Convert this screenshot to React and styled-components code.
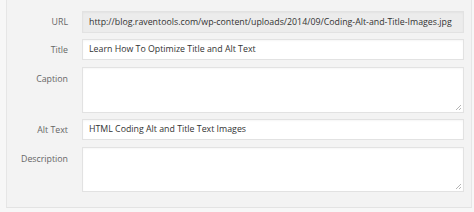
import React from "react";
import styled, { createGlobalStyle } from "styled-components";

const Global = createGlobalStyle`
  html, body { margin: 0; padding: 0; background: #f7f7f7; }
  body { font-family: "Open Sans", "Noto Sans", sans-serif; }
`;

const Frame = styled.div`
  width: 474px;
  height: 212px;
  box-sizing: border-box;
  padding: 0 2px 4px 6px;
  background: #f7f7f7;
`;

const Panel = styled.div`
  box-sizing: border-box;
  height: 100%;
  background: #f3f3f3;
  border-left: 1px solid #e6e6e6;
  border-right: 1px solid #e6e6e6;
  border-bottom: 1px solid #e3e3e3;
  padding: 11px 7px 0 0;
  display: grid;
  grid-template-columns: 75px 1fr;
  row-gap: 6px;
  align-content: start;
`;

const Label = styled.label`
  font-size: 8.8px;
  color: #666;
  text-align: right;
  padding-right: 14px;
  line-height: ${(p) => (p.$multi ? "normal" : "22px")};
  padding-top: ${(p) => (p.$multi ? "6px" : "0")};
`;

const Field = styled.div`
  box-sizing: border-box;
  height: ${(p) => p.$h}px;
  background: ${(p) => (p.$readonly ? "#ececec" : "#fff")};
  border: 1px solid #e2e2e2;
  box-shadow: inset 0 1px 2px rgba(0, 0, 0, 0.04);
  font-size: 8.8px;
  color: #333;
  padding: 0 6px;
  line-height: ${(p) => p.$h - 2}px;
  white-space: nowrap;
  overflow: hidden;
  position: relative;
`;

const Grip = styled.svg`
  position: absolute;
  right: 1px;
  bottom: 1px;
`;

const Resize = () => (
  <Grip width="7" height="7" viewBox="0 0 7 7">
    <path d="M6 1 L1 6 M6 4 L4 6" stroke="#b5b5b5" strokeWidth="1" fill="none" />
  </Grip>
);

export default function App() {
  return (
    <>
      <Global />
      <Frame>
        <Panel>
          <Label>URL</Label>
          <Field $h={22} $readonly>
            http://blog.raventools.com/wp-content/uploads/2014/09/Coding-Alt-and-Title-Images.jpg
          </Field>
          <Label>Title</Label>
          <Field $h={21}>Learn How To Optimize Title and Alt Text</Field>
          <Label $multi>Caption</Label>
          <Field $h={46}>
            <Resize />
          </Field>
          <Label>Alt Text</Label>
          <Field $h={21}>HTML Coding Alt and Title Text Images</Field>
          <Label $multi>Description</Label>
          <Field $h={45}>
            <Resize />
          </Field>
        </Panel>
      </Frame>
    </>
  );
}
